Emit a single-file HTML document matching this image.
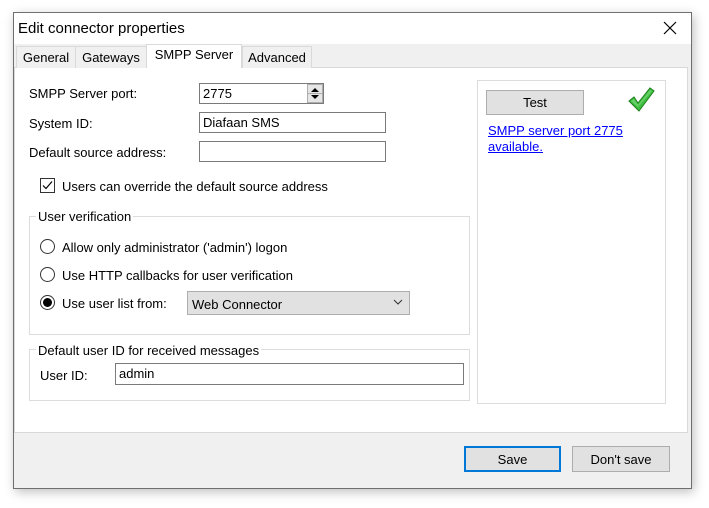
<!DOCTYPE html>
<html><head><meta charset="utf-8"><style>
*{box-sizing:border-box;margin:0;padding:0}
body{width:709px;height:508px;background:#fff;font-family:"Liberation Sans",Arial,sans-serif;font-size:13px;color:#000;position:relative;overflow:hidden}
.abs{position:absolute}
.win{left:13px;top:12px;width:679px;height:477px;border:1px solid #6f6f6f;background:#f0f0f0;box-shadow:2px 3px 10px rgba(0,0,0,.25)}
.title{left:14px;top:13px;width:677px;height:31px;background:#fff}
.page{left:14px;top:67px;width:674px;height:366px;background:#fff;border:1px solid #d9d9d9}
.tab{top:46px;height:22px;border:1px solid #d9d9d9;border-bottom:none;background:#f0f0f0;padding:3px 0 0 0;text-align:center}
.tab.sel{top:44px;height:24px;background:#fff;padding-top:2px}
.inp{border:1px solid #7a7a7a;background:#fff;height:21px;padding:2px 3px;font-size:13px}
.grp{border:1px solid #dcdcdc}
.lg{background:#fff;padding:0 2px}
.radio{width:15px;height:15px;border:1px solid #333;border-radius:50%;background:#fff}
.btn{border:1px solid #adadad;background:#e1e1e1;text-align:center;padding-top:4px}
a{color:#0000ff;text-decoration:underline}
</style></head><body>
<div class="abs win"></div>
<div class="abs title"></div>
<div class="abs" style="left:18px;top:20px;font-size:15px">Edit connector properties</div>
<svg class="abs" style="left:663px;top:21px" width="14" height="14"><path d="M1 1L13 13M13 1L1 13" stroke="#000" stroke-width="1.2"/></svg>
<div class="abs page"></div>
<div class="abs tab" style="left:16px;width:60px">General</div>
<div class="abs tab" style="left:75px;width:72px">Gateways</div>
<div class="abs tab sel" style="left:146px;width:96px;border-color:#d9d9d9">SMPP Server</div>
<div class="abs tab" style="left:242px;width:70px">Advanced</div>

<div class="abs" style="left:29px;top:86px">SMPP Server port:</div>
<div class="abs inp" style="left:199px;top:83px;width:125px">2775</div>
<div class="abs" style="left:307px;top:84px;width:16px;height:19px;border:1px solid #adadad;background:#e6e6e6"></div>
<svg class="abs" style="left:307px;top:84px" width="16" height="19"><path d="M4 8L8 4L12 8Z M4 11L12 11L8 15Z" fill="#000"/><line x1="1" y1="9.5" x2="15" y2="9.5" stroke="#adadad"/></svg>
<div class="abs" style="left:29px;top:116px">System ID:</div>
<div class="abs inp" style="left:199px;top:112px;width:187px">Diafaan SMS</div>
<div class="abs" style="left:29px;top:145px">Default source address:</div>
<div class="abs inp" style="left:199px;top:141px;width:187px"></div>
<div class="abs" style="left:40px;top:178px;width:15px;height:15px;border:1px solid #333;background:#fff"></div>
<svg class="abs" style="left:40px;top:178px" width="15" height="15"><path d="M3 7.5L6 10.5L12 3.5" stroke="#000" fill="none" stroke-width="1.2"/></svg>
<div class="abs" style="left:62px;top:179px">Users can override the default source address</div>

<div class="abs grp" style="left:29px;top:216px;width:441px;height:119px"></div>
<div class="abs lg" style="left:36px;top:209px">User verification</div>
<div class="abs radio" style="left:40px;top:239px"></div>
<div class="abs" style="left:62px;top:240px">Allow only administrator ('admin') logon</div>
<div class="abs radio" style="left:40px;top:267px"></div>
<div class="abs" style="left:62px;top:268px">Use HTTP callbacks for user verification</div>
<div class="abs radio" style="left:40px;top:295px"></div>
<div class="abs" style="left:43px;top:298px;width:9px;height:9px;border-radius:50%;background:#000"></div>
<div class="abs" style="left:62px;top:296px">Use user list from:</div>
<div class="abs" style="left:187px;top:291px;width:223px;height:24px;border:1px solid #adadad;background:#e1e1e1;padding:5px 0 0 4px">Web Connector</div>
<svg class="abs" style="left:393px;top:298px" width="10" height="8"><path d="M1 2L5 6L9 2" stroke="#333" fill="none"/></svg>

<div class="abs grp" style="left:29px;top:349px;width:441px;height:52px"></div>
<div class="abs lg" style="left:36px;top:343px">Default user ID for received messages</div>
<div class="abs" style="left:40px;top:368px">User ID:</div>
<div class="abs inp" style="left:115px;top:363px;width:349px;height:22px">admin</div>

<div class="abs grp" style="left:477px;top:80px;width:189px;height:324px"></div>
<div class="abs btn" style="left:486px;top:90px;width:98px;height:25px">Test</div>
<svg class="abs" style="left:627px;top:86px" width="28" height="28"><path d="M2 15L7 11L11 17L23 2L27 5L12 25Z" fill="#3fbf3f" stroke="#1d7f1d" stroke-width="1"/><path d="M4 15L7 13L11 19L23 4L25 5L11 21Z" fill="#8fe08f" opacity=".5"/></svg>
<div class="abs" style="left:488px;top:123px;line-height:16px"><a>SMPP server port 2775 </a><br><a>available.</a></div>

<div class="abs btn" style="left:464px;top:446px;width:97px;height:26px;border:2px solid #0078d7;padding-top:4px">Save</div>
<div class="abs btn" style="left:572px;top:446px;width:98px;height:26px;padding-top:5px">Don't save</div>
</body></html>
